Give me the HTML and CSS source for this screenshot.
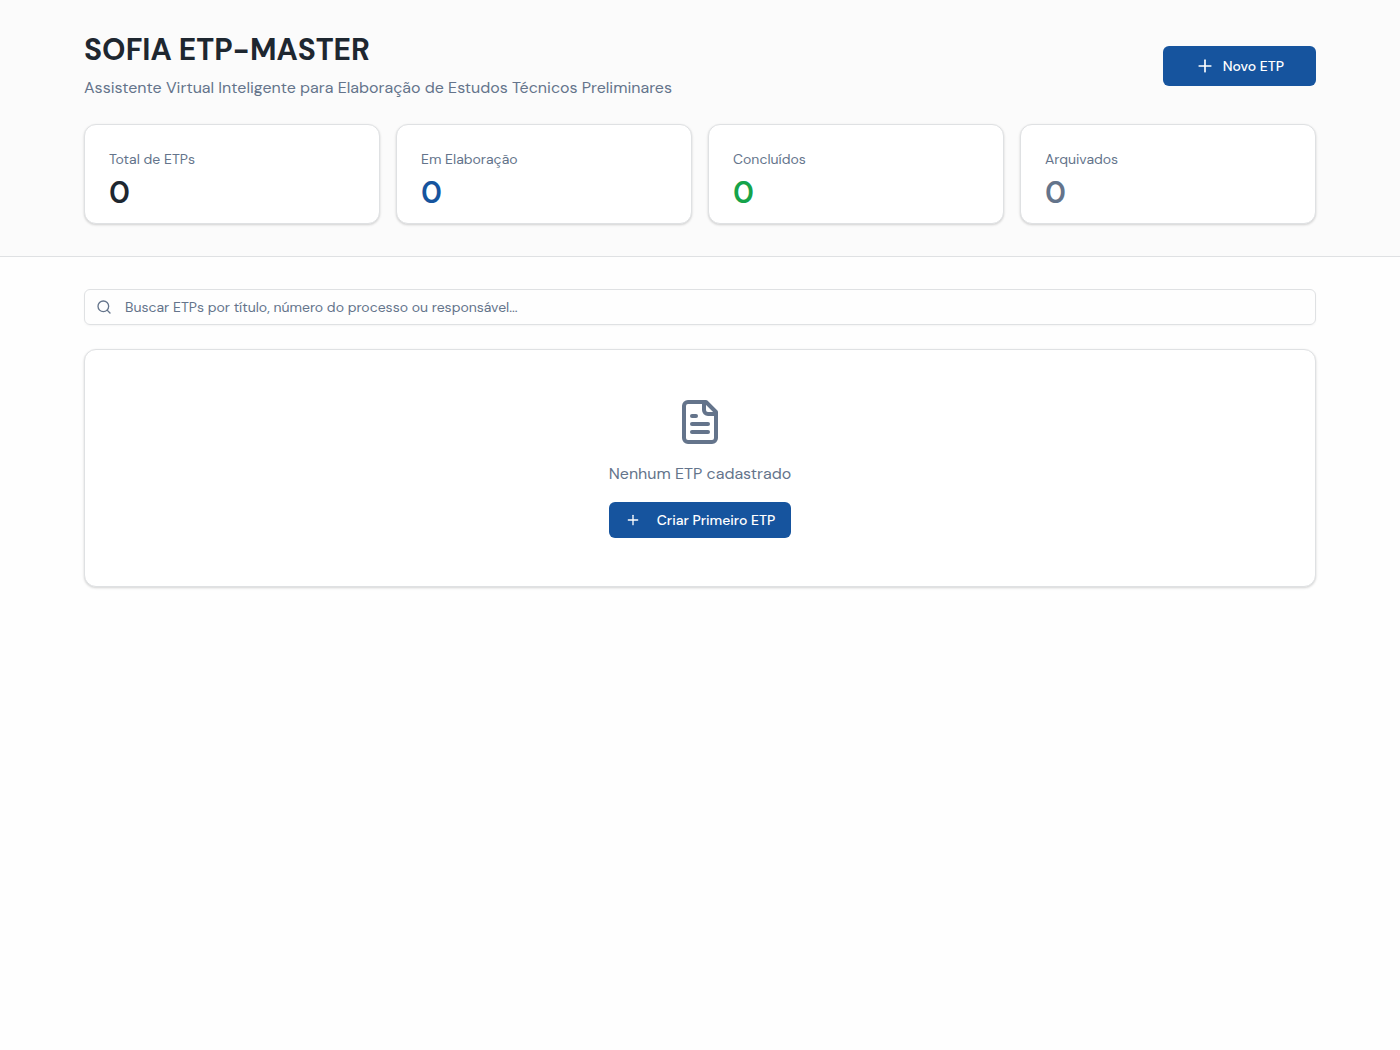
FILE: index.html
```html
<!DOCTYPE html>
<html lang="pt-BR">
<head>
  <meta charset="utf-8">
  <meta name="viewport" content="width=device-width, initial-scale=1">
  <title>SOFIA ETP-MASTER</title>
  <link rel="stylesheet" href="styles.css">
</head>
<body>
  <header class="header">
    <div class="container">
      <div class="header-row">
        <div>
          <h1 class="title">SOFIA ETP-MASTER</h1>
          <p class="subtitle">Assistente Virtual Inteligente para Elaboração de Estudos Técnicos Preliminares</p>
        </div>
        <button type="button" class="button button-large">
          <svg class="icon icon-medium" viewBox="0 0 24 24" aria-hidden="true"><path d="M5 12h14"/><path d="M12 5v14"/></svg>
          Novo ETP
        </button>
      </div>
      <div class="stats">
        <div class="card stat">
          <p class="stat-label">Total de ETPs</p>
          <p class="stat-value">0</p>
        </div>
        <div class="card stat">
          <p class="stat-label">Em Elaboração</p>
          <p class="stat-value value-blue">0</p>
        </div>
        <div class="card stat">
          <p class="stat-label">Concluídos</p>
          <p class="stat-value value-green">0</p>
        </div>
        <div class="card stat">
          <p class="stat-label">Arquivados</p>
          <p class="stat-value value-gray">0</p>
        </div>
      </div>
    </div>
  </header>
  <main class="container main">
    <label class="search">
      <svg class="icon icon-small" viewBox="0 0 24 24" aria-hidden="true"><circle cx="11" cy="11" r="8"/><path d="m21 21-4.34-4.34"/></svg>
      <input class="search-input" type="text" aria-label="Buscar ETPs" placeholder="Buscar ETPs por título, número do processo ou responsável...">
    </label>
    <section class="card empty">
      <svg class="icon icon-large" viewBox="0 0 24 24" aria-hidden="true"><path d="M15 2H6a2 2 0 0 0-2 2v16a2 2 0 0 0 2 2h12a2 2 0 0 0 2-2V7Z"/><path d="M14 2v4a2 2 0 0 0 2 2h4"/><path d="M10 9H8"/><path d="M16 13H8"/><path d="M16 17H8"/></svg>
      <p class="empty-text">Nenhum ETP cadastrado</p>
      <button type="button" class="button button-wide-gap">
        <svg class="icon icon-small" viewBox="0 0 24 24" aria-hidden="true"><path d="M5 12h14"/><path d="M12 5v14"/></svg>
        Criar Primeiro ETP
      </button>
    </section>
  </main>
</body>
</html>
```
FILE: styles.css
```css
:root {
  --blue: #16549e;
  --ink: #1e2730;
  --muted: #64748b;
  --line: #dfe1e3;
}

* {
  box-sizing: border-box;
}

body {
  margin: 0;
  background: #fefefe;
  color: var(--ink);
  font-family: "DM Sans", Inter, "Liberation Sans", sans-serif;
  font-size: 14px;
  line-height: 20px;
}

h1,
p {
  margin: 0;
}

.container {
  max-width: 1280px;
  margin: 0 auto;
  padding: 0 24px;
}

.header {
  padding: 32px 0;
  background: #fbfbfb;
  border-bottom: 1px solid var(--line);
}

.header-row {
  display: flex;
  align-items: center;
  justify-content: space-between;
  gap: 24px;
  margin-bottom: 24px;
}

.title {
  margin-bottom: 8px;
  font-size: 30px;
  font-weight: 700;
  line-height: 36px;
  font-variation-settings: "opsz" 30;
}

.subtitle,
.empty-text {
  color: var(--muted);
  font-size: 16px;
  line-height: 24px;
}

.stats {
  display: grid;
  grid-template-columns: repeat(auto-fit, minmax(200px, 1fr));
  gap: 16px;
}

.card {
  background: #fff;
  border: 1px solid var(--line);
  border-radius: 12px;
  box-shadow: 0 1px 3px rgba(0, 0, 0, 0.1), 0 1px 2px rgba(0, 0, 0, 0.08);
}

.stat {
  display: flex;
  flex-direction: column;
  gap: 6px;
  padding: 24px 24px 12px;
}

.stat-label {
  color: var(--muted);
}

.stat-value {
  font-size: 30px;
  font-weight: 600;
  line-height: 36px;
  font-variation-settings: "opsz" 30;
}

.value-blue {
  color: var(--blue);
}

.value-green {
  color: #16a34a;
}

.value-gray {
  color: var(--muted);
}

.main {
  display: flex;
  flex-direction: column;
  gap: 24px;
  padding-top: 32px;
  padding-bottom: 32px;
}

.search {
  display: flex;
  align-items: center;
  gap: 12px;
  height: 36px;
  padding: 0 11px;
  border: 1px solid var(--line);
  border-radius: 6px;
  box-shadow: 0 1px 2px rgba(0, 0, 0, 0.04);
  color: var(--muted);
}

.search:focus-within {
  border-color: var(--blue);
}

.search-input {
  flex: 1;
  min-width: 0;
  padding: 0 1px;
  border: 0;
  outline: 0;
  background: transparent;
  color: var(--ink);
  font: inherit;
}

.search-input::placeholder {
  color: var(--muted);
  opacity: 1;
}

.empty {
  display: flex;
  flex-direction: column;
  align-items: center;
  gap: 16px;
  padding: 48px 24px;
  color: var(--muted);
}

.button {
  display: inline-flex;
  align-items: center;
  justify-content: center;
  gap: 8px;
  height: 36px;
  padding: 0 16px;
  border: 0;
  border-radius: 6px;
  background: var(--blue);
  color: #fff;
  font: inherit;
  font-weight: 500;
  white-space: nowrap;
  cursor: pointer;
}

.button-large {
  height: 40px;
  padding: 0 32px;
}

.button-wide-gap {
  gap: 16px;
}

.icon {
  flex: none;
  fill: none;
  stroke: currentColor;
  stroke-width: 2;
  stroke-linecap: round;
  stroke-linejoin: round;
}

.icon-small {
  width: 16px;
  height: 16px;
}

.icon-medium {
  width: 20px;
  height: 20px;
}

.icon-large {
  width: 48px;
  height: 48px;
}
```
